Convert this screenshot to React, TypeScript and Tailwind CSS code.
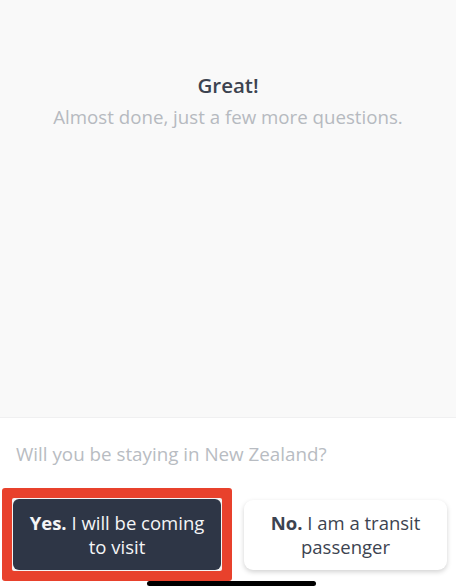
import React from "react";

// 入国確認のステップ画面
export default function App() {
  return (
    <div className="w-[456px] h-[586px] flex flex-col bg-white overflow-hidden" style={{ fontFamily: "'Open Sans', 'Noto Sans', sans-serif" }}>
      <div className="h-[418px] bg-[#f9f9f9] border-b border-[#f0f0f1] flex flex-col items-center pt-[69px]">
        <div className="text-[20.5px] leading-[32px] font-semibold text-[#3c4350]">Great!</div>
        <div className="text-[18.7px] leading-[28px] text-[#b6bac0] mt-[2px]">Almost done, just a few more questions.</div>
      </div>
      <div className="flex-1 flex flex-col">
        <div className="pl-4 pt-[22px] text-[18.8px] leading-[28px] text-[#b8bcc2]">Will you be staying in New Zealand?</div>
        <div className="relative flex items-start mt-[20px] pl-[2px]">
          <div className="relative z-10 w-[230px] h-[93px] bg-[#e8412c] rounded-[3px] p-[10px]">
            <div className="w-full h-full bg-[#f4f4f4] rounded-[2px] p-[1px]">
              <button className="w-full h-full bg-[#2e3646] rounded-[6px] text-[#f4f5f6] text-[18.5px] leading-[24px] px-2">
                <span className="font-bold">Yes.</span> I will be coming to visit
              </button>
            </div>
          </div>
          <button className="ml-[12px] mt-[12px] w-[203px] h-[70px] bg-white rounded-[9px] shadow-[0_2px_5px_rgba(0,0,0,0.18)] text-[#3c4350] text-[18.5px] leading-[24px] px-4">
            <span className="font-bold">No.</span> I am a transit passenger
          </button>
          <div className="absolute left-[147px] top-[93px] w-[169px] h-[5px] bg-black rounded-full" />
        </div>
      </div>
    </div>
  );
}
